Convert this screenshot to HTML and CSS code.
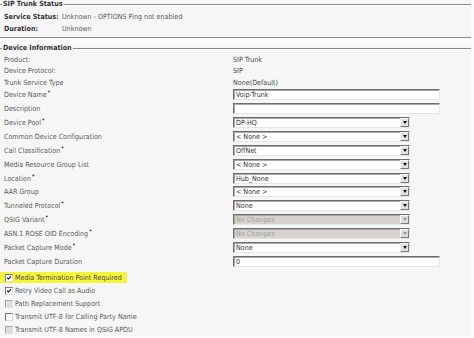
FILE: index.html
```html
<!DOCTYPE html>
<html>
<head>
<meta charset="utf-8">
<link rel="stylesheet" href="styles.css">
</head>
<body>
<div class="panel status">
  <div class="legend"><span>SIP Trunk Status</span></div>
  <div class="status-body">
    <div class="srow"><span class="slabel">Service Status:</span><span class="sval">Unknown - OPTIONS Ping not enabled</span></div>
    <div class="srow"><span class="slabel">Duration:</span><span class="sval">Unknown</span></div>
  </div>
</div>
<div class="panel device">
  <div class="legend"><span>Device Information</span></div>
  <div class="device-body">
    <div class="trow"><span class="label">Product:</span><span class="val">SIP Trunk</span></div>
    <div class="trow"><span class="label">Device Protocol:</span><span class="val">SIP</span></div>
    <div class="trow"><span class="label">Trunk Service Type</span><span class="val">None(Default)</span></div>
    <div class="frow"><span class="label">Device Name<b class="req">*</b></span><div class="input"><span>Voip-Trunk</span></div></div>
    <div class="frow"><span class="label">Description</span><div class="input"></div></div>
    <div class="frow"><span class="label">Device Pool<b class="req">*</b></span><div class="select"><span class="stext">DP-HQ</span><span class="arrow"></span></div></div>
    <div class="frow"><span class="label">Common Device Configuration</span><div class="select"><span class="stext">&lt; None &gt;</span><span class="arrow"></span></div></div>
    <div class="frow"><span class="label">Call Classification<b class="req">*</b></span><div class="select"><span class="stext">OffNet</span><span class="arrow"></span></div></div>
    <div class="frow"><span class="label">Media Resource Group List</span><div class="select"><span class="stext">&lt; None &gt;</span><span class="arrow"></span></div></div>
    <div class="frow"><span class="label">Location<b class="req">*</b></span><div class="select"><span class="stext">Hub_None</span><span class="arrow"></span></div></div>
    <div class="frow"><span class="label">AAR Group</span><div class="select"><span class="stext">&lt; None &gt;</span><span class="arrow"></span></div></div>
    <div class="frow"><span class="label">Tunneled Protocol<b class="req">*</b></span><div class="select"><span class="stext">None</span><span class="arrow"></span></div></div>
    <div class="frow"><span class="label">QSIG Variant<b class="req">*</b></span><div class="select disabled"><span class="stext">No Changes</span><span class="arrow"></span></div></div>
    <div class="frow"><span class="label">ASN.1 ROSE OID Encoding<b class="req">*</b></span><div class="select disabled"><span class="stext">No Changes</span><span class="arrow"></span></div></div>
    <div class="frow"><span class="label">Packet Capture Mode<b class="req">*</b></span><div class="select"><span class="stext">None</span><span class="arrow"></span></div></div>
    <div class="frow"><span class="label">Packet Capture Duration</span><div class="input"><span>0</span></div></div>
    <div class="checks">
      <div class="cbrow"><span class="cbitem hl"><span class="cb"><svg viewBox="0 0 8 8" width="8" height="8"><path d="M1.5 3.6 L3.2 5.4 L6.6 1.8" fill="none" stroke="#000" stroke-width="1.5"/></svg></span>Media Termination Point Required</span></div>
      <div class="cbrow"><span class="cbitem"><span class="cb"><svg viewBox="0 0 8 8" width="8" height="8"><path d="M1.5 3.6 L3.2 5.4 L6.6 1.8" fill="none" stroke="#000" stroke-width="1.5"/></svg></span>Retry Video Call as Audio</span></div>
      <div class="cbrow"><span class="cbitem"><span class="cb off"></span>Path Replacement Support</span></div>
      <div class="cbrow"><span class="cbitem"><span class="cb"></span>Transmit UTF-8 for Calling Party Name</span></div>
      <div class="cbrow"><span class="cbitem"><span class="cb off"></span>Transmit UTF-8 Names in QSIG APDU</span></div>
    </div>
  </div>
</div>
</body>
</html>
```
FILE: styles.css
```css
html, body {
  margin: 0;
  padding: 0;
}
body {
  background: #fbfbfb;
  font-family: "DejaVu Sans Condensed", "DejaVu Sans", sans-serif;
  font-size: 7.1px;
  color: #5a5a5a;
  width: 474px;
  height: 338px;
  overflow: hidden;
}
.panel {
  width: 471px;
  background: #f6f6f6;
}
.legend {
  display: flex;
  align-items: center;
  height: 8px;
  font-weight: bold;
  color: #333;
}
.legend::before,
.legend::after {
  content: "";
  height: 1px;
  background: #8a8a8a;
  box-shadow: 0 1px 0 #fff;
}
.legend::before {
  width: 2px;
}
.legend::after {
  flex: 1;
}
.legend span {
  padding: 0 1px;
  line-height: 8px;
}
.status {
  border-bottom: 1px solid #8a8a8a;
  box-shadow: 0 1px 0 #fff;
}
.status-body {
  padding: 2px 0 3px 4px;
}
.srow {
  display: flex;
  align-items: center;
  height: 12px;
}
.slabel {
  width: 58px;
  font-weight: bold;
  color: #333;
}
.sval {
  color: #5a5a5a;
}
.device {
  margin-top: 6px;
}
.device-body {
  padding-top: 1.25px;
}
.trow, .frow {
  display: flex;
  align-items: center;
  padding-left: 4px;
}
.trow {
  height: 11.5px;
}
.frow {
  height: 13.9px;
}
.label {
  width: 229px;
  flex: none;
}
.val {
  color: #4a4a4a;
}
.req {
  font-size: 5px;
  color: #000;
  vertical-align: top;
  position: relative;
  top: -1px;
  margin-left: 1px;
}
.input {
  box-sizing: border-box;
  width: 207px;
  height: 11px;
  border: 1px solid;
  border-color: #6e6e6e #e6e6e6 #e6e6e6 #6e6e6e;
  box-shadow: inset 1px 1px 0 #a8a8a8;
  background: #fff;
  display: flex;
  align-items: center;
  padding-left: 2px;
  color: #333;
}
.select {
  box-sizing: border-box;
  width: 177px;
  height: 11px;
  border: 1px solid;
  border-color: #6e6e6e #e6e6e6 #e6e6e6 #6e6e6e;
  box-shadow: inset 1px 1px 0 #a8a8a8;
  background: #fff;
  display: flex;
  align-items: center;
  color: #333;
}
.stext {
  flex: 1;
  padding-left: 2px;
}
.arrow {
  box-sizing: border-box;
  width: 9px;
  height: 9px;
  margin-right: 0;
  background: #e2e2e2;
  border: 1px solid;
  border-color: #fafafa #7a7a7a #7a7a7a #fafafa;
  display: flex;
  align-items: center;
  justify-content: center;
}
.arrow::after {
  content: "";
  border-top: 3px solid #111;
  border-left: 2px solid transparent;
  border-right: 2px solid transparent;
}
.select.disabled {
  background: #d6d3ce;
  color: #a3a3a3;
}
.select.disabled .arrow {
  background: #dcdcdc;
}
.select.disabled .arrow::after {
  border-top-color: #9a9a9a;
}
.checks {
  padding-top: 3px;
}
.cbrow {
  height: 13px;
  display: flex;
  align-items: center;
}
.cbitem {
  display: inline-flex;
  align-items: center;
  height: 11px;
  padding: 0 5px 0 5px;
}
.hl {
  background: #f7f53a;
  color: #4a4a4a;
}
.cb {
  box-sizing: border-box;
  width: 8px;
  height: 8px;
  margin-right: 2px;
  border: 1px solid;
  border-color: #7a7a7a #dadada #dadada #7a7a7a;
  background: #fff;
  display: inline-flex;
  align-items: center;
  justify-content: center;
}
.cb svg {
  display: block;
  width: 6px;
  height: 6px;
}
.cb.off {
  background: #dedede;
  border-color: #a6a6a6 #e4e4e4 #e4e4e4 #a6a6a6;
}
```
